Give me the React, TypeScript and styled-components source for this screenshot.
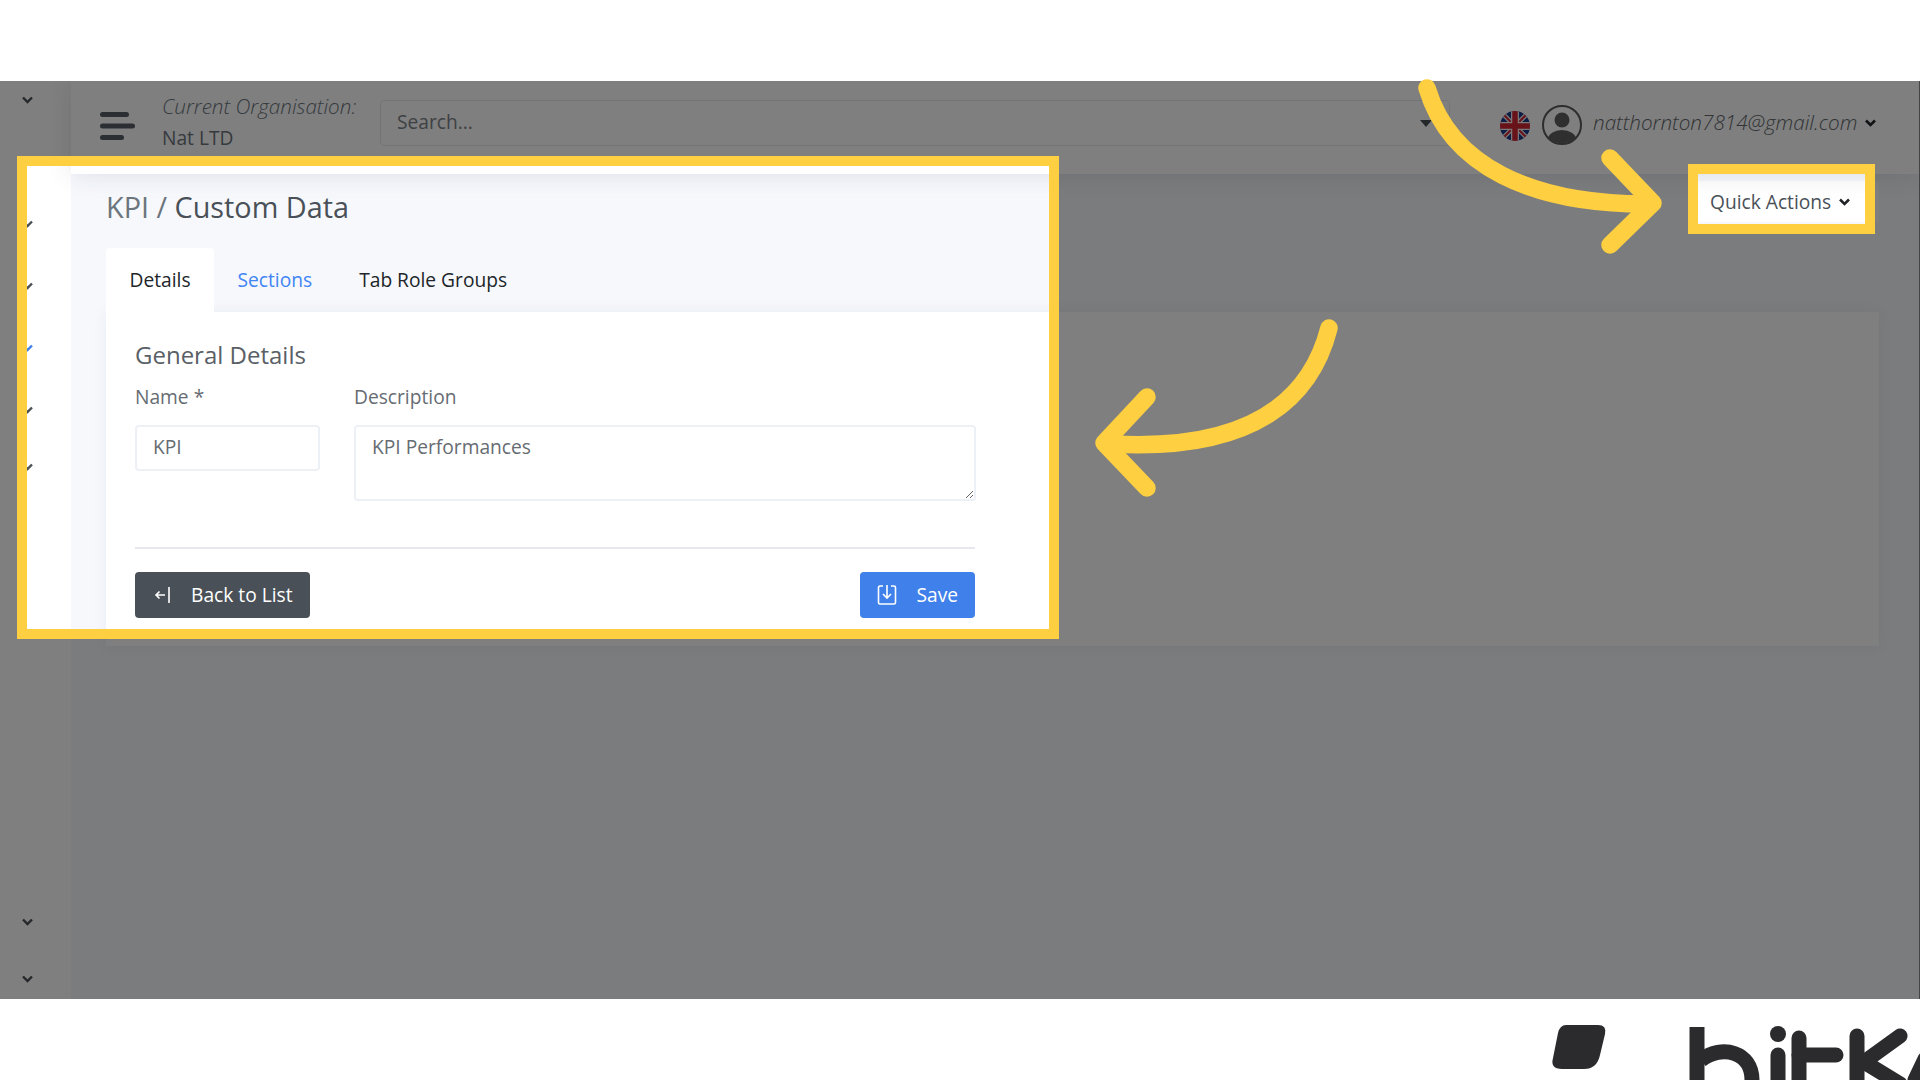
import React from "react";
import styled, { createGlobalStyle } from "styled-components";

const Global = createGlobalStyle`
  html, body { margin: 0; padding: 0; background: #fff; }
  body { width: 1920px; height: 1080px; overflow: hidden; font-family: "Open Sans", "Liberation Sans", sans-serif; }
  * { box-sizing: border-box; }
`;

const Page = styled.div`
  position: relative;
  width: 1920px;
  height: 1080px;
  padding-top: 81px;
  background: #fff;
  overflow: hidden;
`;
const Frame = styled.div`
  position: relative;
  display: flex;
  width: 1920px;
  height: 918px;
  overflow: hidden;
  border-right: 1px solid #444;
`;
const Sidebar = styled.aside`
  flex: 0 0 71px;
  display: flex;
  flex-direction: column;
  align-items: flex-start;
  padding: 15px 0 16px 22px;
  background: #fff;
`;
const SideGroup = styled.div`
  display: flex;
  flex-direction: column;
  gap: 54px;
  margin-top: 116px;
`;
const SideBottom = styled.div`
  display: flex;
  flex-direction: column;
  gap: 49px;
  margin-top: auto;
`;
const SideChevron = styled.svg<{ $blue?: boolean; $tight?: boolean }>`
  display: block;
  width: 11px;
  height: 8px;
  margin-top: ${(p) => (p.$tight ? "-5px" : "0")};
  fill: none;
  stroke: ${(p) => (p.$blue ? "#3f80ea" : "#495057")};
  stroke-width: 2.4;
`;
const Column = styled.div`
  flex: 1;
  display: flex;
  flex-direction: column;
  min-width: 0;
`;
const Header = styled.header`
  position: relative;
  z-index: 1;
  flex: 0 0 93px;
  display: flex;
  align-items: center;
  padding: 0 0 9px 29px;
  background: #fff;
  box-shadow: 0 0 24px rgba(40, 50, 70, 0.13);
`;
const Burger = styled.svg`
  flex: 0 0 35px;
  width: 35px;
  height: 29px;
  margin: 7px 27px 0 0;
  fill: #565c66;
`;
const Org = styled.div`
  flex: 0 0 218px;
  margin-top: -2px;
  font-size: 19.2px;
  line-height: 31px;
  color: #6c757d;
`;
const OrgLabel = styled.div`
  font-size: 20.7px;
  font-style: italic;
  font-weight: 300;
`;
const Search = styled.div`
  flex: 0 0 1070px;
  display: flex;
  align-items: center;
  height: 46px;
  padding: 0 17px 0 16px;
  border: 1px solid #e6e9ee;
  border-radius: 4px;
`;
const SearchInput = styled.input`
  flex: 1;
  min-width: 0;
  border: 0;
  outline: 0;
  padding: 0 0 4px;
  font: 19.2px "Open Sans", sans-serif;
  background: transparent;
  &::placeholder { color: #7d8388; opacity: 1; }
`;
const Caret = styled.span`
  width: 0;
  height: 0;
  border-left: 6px solid transparent;
  border-right: 6px solid transparent;
  border-top: 7px solid #495057;
`;
const Flag = styled.svg`
  flex: 0 0 30px;
  width: 30px;
  height: 30px;
  margin: 5px 12px 0 50px;
`;
const Avatar = styled.svg`
  flex: 0 0 40px;
  width: 40px;
  height: 40px;
  margin: 3px 11px 0 0;
`;
const Email = styled.div`
  font-size: 20.7px;
  font-style: italic;
  font-weight: 300;
  color: #62676b;
  white-space: nowrap;
  margin-top: -3px;
`;
const InlineChevron = styled.svg`
  flex: none;
  width: 11px;
  height: 8px;
  margin-left: 8px;
  fill: none;
  stroke: #212529;
  stroke-width: 2.6;
`;
const Main = styled.main`
  flex: 1;
  padding: 0 40px 0 35px;
  background: #f6f8fc;
`;
const TitleRow = styled.div`
  display: flex;
  justify-content: space-between;
  align-items: flex-start;
  height: 74px;
  padding-top: 7px;
`;
const Title = styled.h1`
  margin: 0;
  font-size: 28.8px;
  font-weight: 400;
  line-height: 51px;
  color: #495057;
`;
const Crumb = styled.span`
  color: #6c757d;
`;
const QuickActions = styled.div`
  display: flex;
  align-items: center;
  width: 182px;
  height: 41px;
  padding-left: 13px;
  background: #fff;
  font-size: 19.2px;
  color: #495057;
`;
const Tabs = styled.nav`
  display: flex;
  height: 64px;
`;
const Tab = styled.div<{ $active?: boolean; $blue?: boolean }>`
  display: flex;
  align-items: center;
  padding: 0 23.5px 1px;
  font-size: 19.2px;
  border-radius: 4px 4px 0 0;
  background: ${(p) => (p.$active ? "#fff" : "transparent")};
  color: ${(p) => (p.$blue ? "#4285f4" : "#212529")};
`;
const Card = styled.section`
  height: 334px;
  padding: 29px 29px 0;
  background: #fff;
  box-shadow: 0 0 14px rgba(40, 50, 70, 0.06);
`;
const Form = styled.div`
  width: 840px;
`;
const SectionTitle = styled.h2`
  margin: 0 0 16px;
  font-size: 24px;
  font-weight: 400;
  line-height: 28px;
  color: #5a6066;
`;
const Fields = styled.div`
  display: flex;
  gap: 34px;
  height: 115px;
`;
const Field = styled.div<{ $w: number }>`
  flex: 0 0 ${(p) => p.$w}px;
`;
const Label = styled.label`
  display: block;
  margin-bottom: 16px;
  font-size: 19.2px;
  line-height: 24px;
  color: #666c72;
`;
const TextInput = styled.input`
  display: block;
  width: 100%;
  height: 46px;
  padding: 0 16px 3px;
  border: 2px solid #edf0f5;
  border-radius: 4px;
  outline: 0;
  background: #fff;
  font: 19.2px "Open Sans", sans-serif;
  color: #666c72;
`;
const TextArea = styled.textarea`
  display: block;
  width: 100%;
  height: 76px;
  padding: 7px 16px;
  border: 2px solid #edf0f5;
  border-radius: 4px;
  outline: 0;
  background: #fff;
  font: 19.2px/1.4 "Open Sans", sans-serif;
  color: #666c72;
`;
const Divider = styled.hr`
  height: 2px;
  margin: 47px 0 23px;
  border: 0;
  background: #e6e8eb;
`;
const Actions = styled.div`
  display: flex;
  justify-content: space-between;
`;
const Button = styled.div<{ $primary?: boolean }>`
  display: flex;
  align-items: center;
  gap: 19px;
  height: 46px;
  padding: 0 17px 1px;
  border-radius: 4px;
  background: ${(p) => (p.$primary ? "#3f80ea" : "#495057")};
  color: #fff;
  font-size: 19.2px;
`;
const ButtonIcon = styled.svg`
  flex: none;
  width: 20px;
  height: 24px;
  fill: none;
  stroke: #fff;
  stroke-width: 1.6;
`;
const Dim = styled.div`
  position: absolute;
  inset: 0;
  z-index: 2;
  background: rgba(0, 0, 0, 0.5);
  clip-path: path(evenodd, "M0 0H1920V918H0Z M27 85H1050V548H27Z M1698 93H1865V143H1698Z");
`;
const Spotlight = styled.div<{ $x: number; $y: number; $w: number; $h: number }>`
  position: absolute;
  z-index: 3;
  left: ${(p) => p.$x}px;
  top: ${(p) => p.$y}px;
  width: ${(p) => p.$w}px;
  height: ${(p) => p.$h}px;
  border: 10px solid #fecf40;
`;
const Arrows = styled.svg`
  position: absolute;
  z-index: 4;
  left: 0;
  top: 0;
  width: 1920px;
  height: 1080px;
  fill: none;
  stroke: #fecf40;
  stroke-width: 17.5;
  stroke-linecap: round;
  stroke-linejoin: round;
`;
const Footer = styled.svg`
  display: block;
  width: 1920px;
  height: 81px;
`;

const Chev = "M1 1.5 L5.5 6 L10 1.5";

export default function App() {
  return (
    <Page>
      <Global />
      <Frame>
        <Sidebar>
          <SideChevron viewBox="0 0 11 8"><path d={Chev} /></SideChevron>
          <SideGroup>
            <SideChevron viewBox="0 0 11 8"><path d={Chev} /></SideChevron>
            <SideChevron viewBox="0 0 11 8"><path d={Chev} /></SideChevron>
            <SideChevron $blue viewBox="0 0 11 8"><path d={Chev} /></SideChevron>
            <SideChevron viewBox="0 0 11 8"><path d={Chev} /></SideChevron>
            <SideChevron $tight viewBox="0 0 11 8"><path d={Chev} /></SideChevron>
          </SideGroup>
          <SideBottom>
            <SideChevron viewBox="0 0 11 8"><path d={Chev} /></SideChevron>
            <SideChevron viewBox="0 0 11 8"><path d={Chev} /></SideChevron>
          </SideBottom>
        </Sidebar>
        <Column>
          <Header>
            <Burger viewBox="0 0 35 29">
              <rect x="0" y="0" width="29" height="5" rx="2.5" />
              <rect x="0" y="11.5" width="35" height="5" rx="2.5" />
              <rect x="0" y="23" width="24" height="5" rx="2.5" />
            </Burger>
            <Org>
              <OrgLabel>Current Organisation:</OrgLabel>
              <div>Nat LTD</div>
            </Org>
            <Search>
              <SearchInput placeholder="Search..." readOnly />
              <Caret />
            </Search>
            <Flag viewBox="0 0 30 30">
              <defs>
                <clipPath id="flagClip"><circle cx="15" cy="15" r="15" /></clipPath>
              </defs>
              <g clipPath="url(#flagClip)">
                <rect width="30" height="30" fill="#1a3a8c" />
                <path d="M0 0L30 30M30 0L0 30" stroke="#f2f2f2" strokeWidth="4.5" />
                <path d="M0 0L30 30M30 0L0 30" stroke="#d02535" strokeWidth="2" />
                <path d="M15 0V30M0 15H30" stroke="#f2f2f2" strokeWidth="8" />
                <path d="M15 0V30M0 15H30" stroke="#d02535" strokeWidth="5.5" />
              </g>
            </Flag>
            <Avatar viewBox="0 0 40 40">
              <defs>
                <clipPath id="avatarClip"><circle cx="20" cy="20" r="18.5" /></clipPath>
              </defs>
              <circle cx="20" cy="20" r="19" fill="none" stroke="#5a5a5a" strokeWidth="2" />
              <circle cx="20" cy="15" r="7.5" fill="#5f5f5f" />
              <g clipPath="url(#avatarClip)">
                <ellipse cx="20" cy="34" rx="14" ry="9" fill="#5f5f5f" />
              </g>
            </Avatar>
            <Email>natthornton7814@gmail.com</Email>
            <InlineChevron viewBox="0 0 11 8"><path d={Chev} /></InlineChevron>
          </Header>
          <Main>
            <TitleRow>
              <Title><Crumb>KPI / </Crumb>Custom Data</Title>
              <QuickActions>
                Quick Actions
                <InlineChevron viewBox="0 0 11 8"><path d={Chev} /></InlineChevron>
              </QuickActions>
            </TitleRow>
            <Tabs>
              <Tab $active>Details</Tab>
              <Tab $blue>Sections</Tab>
              <Tab>Tab Role Groups</Tab>
            </Tabs>
            <Card>
              <Form>
                <SectionTitle>General Details</SectionTitle>
                <Fields>
                  <Field $w={185}>
                    <Label>Name *</Label>
                    <TextInput value="KPI" readOnly />
                  </Field>
                  <Field $w={622}>
                    <Label>Description</Label>
                    <TextArea value="KPI Performances" readOnly />
                  </Field>
                </Fields>
                <Divider />
                <Actions>
                  <Button>
                    <ButtonIcon viewBox="0 0 20 24">
                      <path d="M17 4V20M13 12H4M7.500 8.500L4 12L7.500 15.500" />
                    </ButtonIcon>
                    Back to List
                  </Button>
                  <Button $primary>
                    <ButtonIcon viewBox="0 0 20 24">
                      <path d="M6 3H3Q1.5 3 1.5 4.5V19.5Q1.5 21 3 21H17Q18.500 21 18.500 19.500V4.500Q18.500 3 17 3H14M10 2V15M6 11L10 15L14 11" />
                    </ButtonIcon>
                    Save
                  </Button>
                </Actions>
              </Form>
            </Card>
          </Main>
        </Column>
        <Dim />
        <Spotlight $x={17} $y={75} $w={1042} $h={483} />
        <Spotlight $x={1688} $y={83} $w={187} $h={70} />
      </Frame>
      <Footer viewBox="0 0 1920 81">
        <path d="M1566 26H1598Q1607 26 1605 35L1600 56Q1597 70 1584 70H1562Q1550 70 1553 59L1558 34Q1560 26 1566 26Z" fill="#2b2a2d" />
        <circle cx="1778" cy="35" r="8" fill="#2b2a2d" />
        <g fill="none" stroke="#2b2a2d" strokeWidth="15" strokeLinecap="round">
          <path d="M1697 28V81" strokeLinecap="butt" />
          <path d="M1701 61C1722 45 1752 53 1752 81" strokeLinecap="butt" />
          <path d="M1778 56V81" />
          <path d="M1799 39V81" />
          <path d="M1799 56H1836" />
          <path d="M1857 37V81" />
          <path d="M1864 63L1900 37M1864 63L1900 85" />
          <path d="M1925 60L1915 81" />
        </g>
      </Footer>
      <Arrows viewBox="0 0 1920 1080">
        <path d="M1427 88C1450 165 1530 205 1650 204" />
        <path d="M1610 158L1653 203L1610 245" />
        <path d="M1329 328C1312 395 1258 452 1112 444" />
        <path d="M1147 397L1104 443L1147 488" />
      </Arrows>
    </Page>
  );
}
